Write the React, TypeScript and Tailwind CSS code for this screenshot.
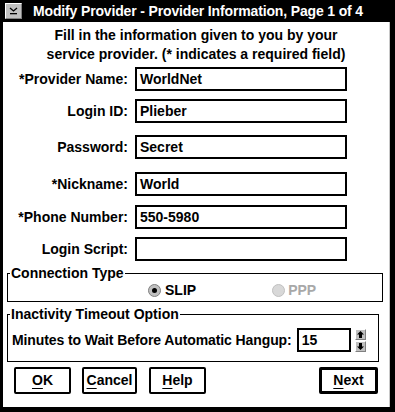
import React from "react";

type Field = { label: string; value: string; required?: boolean; mt: string };

const fields: Field[] = [
  { label: "Provider Name:", value: "WorldNet", required: true, mt: "mt-0" },
  { label: "Login ID:", value: "Plieber", mt: "mt-[8px]" },
  { label: "Password:", value: "Secret", mt: "mt-[12px]" },
  { label: "Nickname:", value: "World", required: true, mt: "mt-[13px]" },
  { label: "Phone Number:", value: "550-5980", required: true, mt: "mt-[9px]" },
  { label: "Login Script:", value: "", mt: "mt-[8px]" },
];

function Mnemonic({ first, rest }: { first: string; rest: string }) {
  return (
    <span>
      <span className="underline underline-offset-[3px] decoration-[1px]">{first}</span>
      {rest}
    </span>
  );
}

function Button({ children, w, isDefault }: { children: React.ReactNode; w: string; isDefault?: boolean }) {
  return (
    <button
      className={`h-[27px] ${w} bg-white rounded-[2px] flex items-center justify-center text-[14px] font-bold ${
        isDefault ? "border-[3px] border-black" : "border-2 border-black"
      }`}
    >
      {children}
    </button>
  );
}

export default function App() {
  return (
    <div
      className="w-[395px] h-[412px] bg-black flex flex-col text-black"
      style={{ fontFamily: '"Liberation Sans", Arial, sans-serif' }}
    >
      {/* Title bar */}
      <div className="h-[22px] flex items-center shrink-0">
        <div className="ml-[5px] w-[17px] h-[16px] bg-[#c0c0c0] border-t border-l border-white border-r border-b border-r-[#808080] border-b-[#808080] flex items-center justify-center">
          <svg width="9" height="8" viewBox="0 0 9 8">
            <path d="M1 1 L4.5 4 L8 1" fill="none" stroke="#000" strokeWidth="1.3" />
            <rect x="1" y="6" width="7" height="1.3" fill="#000" />
          </svg>
        </div>
        <div className="ml-[11px] text-white font-bold text-[14px] tracking-[-0.15px] whitespace-nowrap">
          Modify Provider - Provider Information, Page 1 of 4
        </div>
      </div>

      {/* Client area */}
      <div className="flex-1 ml-[3px] mr-[5px] mb-[5px] bg-white border-r border-[#c8c8c8] flex flex-col">
        <div className="pt-[4px] text-center font-bold text-[14px] leading-[19px]">
          <div>Fill in the information given to you by your</div>
          <div>service provider. (* indicates a required field)</div>
        </div>

        <div className="mt-[3px] flex flex-col">
          {fields.map((f) => (
            <div key={f.label} className={`flex items-center ${f.mt}`}>
              <div className="w-[125px] text-right font-bold text-[14px] whitespace-nowrap">
                {f.required ? "*" : ""}
                {f.label}
              </div>
              <div className="ml-[7px] w-[212px] h-[24px] border-2 border-black flex items-center px-[3px] font-bold text-[14px]">
                {f.value}
              </div>
            </div>
          ))}
        </div>

        <fieldset className="mt-[4px] ml-[4px] w-[376px] h-[37px] border border-black px-[2px] pt-0 pb-0">
          <legend className="px-[1px] font-bold text-[14px] leading-[16px]">Connection Type</legend>
          <div className="flex items-center h-[22px] -mt-[2px]">
            <div className="ml-[138px] flex items-center gap-[4px]">
              <span className="w-[13px] h-[13px] rounded-full bg-[#c0c0c0] border border-[#808080] flex items-center justify-center">
                <span className="w-[5px] h-[5px] rounded-full bg-black" />
              </span>
              <span className="font-bold text-[14px]">SLIP</span>
            </div>
            <div className="ml-[76px] flex items-center gap-[3px]">
              <span className="w-[13px] h-[13px] rounded-full bg-[#d8d8d8] border border-[#c0c0c0]" />
              <span className="font-bold text-[14px] text-[#a8a8a8]">PPP</span>
            </div>
          </div>
        </fieldset>

        <fieldset className="mt-[4px] ml-[4px] w-[372px] h-[56px] border border-black px-[2px] pt-0 pb-0">
          <legend className="px-[1px] font-bold text-[14px] leading-[16px]">Inactivity Timeout Option</legend>
          <div className="flex items-center mt-[6px]">
            <span className="ml-[2px] font-bold text-[14px] tracking-[-0.1px] whitespace-nowrap">
              Minutes to Wait Before Automatic Hangup:
            </span>
            <div className="ml-[5px] w-[54px] h-[24px] border-2 border-black flex items-center px-[3px] font-bold text-[14px]">
              15
            </div>
            <div className="ml-[4px] flex flex-col gap-[1px]">
              {["up", "down"].map((d) => (
                <div
                  key={d}
                  className="w-[11px] h-[11px] bg-[#c0c0c0] border-t border-l border-white border-r border-b border-r-[#808080] border-b-[#808080] flex items-center justify-center"
                >
                  <svg width="7" height="7" viewBox="0 0 7 7">
                    {d === "up" ? (
                      <path d="M3.5 0 L7 3.5 L5 3.5 L5 7 L2 7 L2 3.5 L0 3.5 Z" fill="#000" />
                    ) : (
                      <path d="M3.5 7 L7 3.5 L5 3.5 L5 0 L2 0 L2 3.5 L0 3.5 Z" fill="#000" />
                    )}
                  </svg>
                </div>
              ))}
            </div>
          </div>
        </fieldset>

        <div className="mt-[5px] flex items-center">
          <div className="ml-[11px]">
            <Button w="w-[57px]">
              <Mnemonic first="O" rest="K" />
            </Button>
          </div>
          <div className="ml-[11px]">
            <Button w="w-[55px]">
              <Mnemonic first="C" rest="ancel" />
            </Button>
          </div>
          <div className="ml-[12px]">
            <Button w="w-[57px]">
              <Mnemonic first="H" rest="elp" />
            </Button>
          </div>
          <div className="ml-[113px]">
            <Button w="w-[59px]" isDefault>
              <Mnemonic first="N" rest="ext" />
            </Button>
          </div>
        </div>
      </div>
    </div>
  );
}
